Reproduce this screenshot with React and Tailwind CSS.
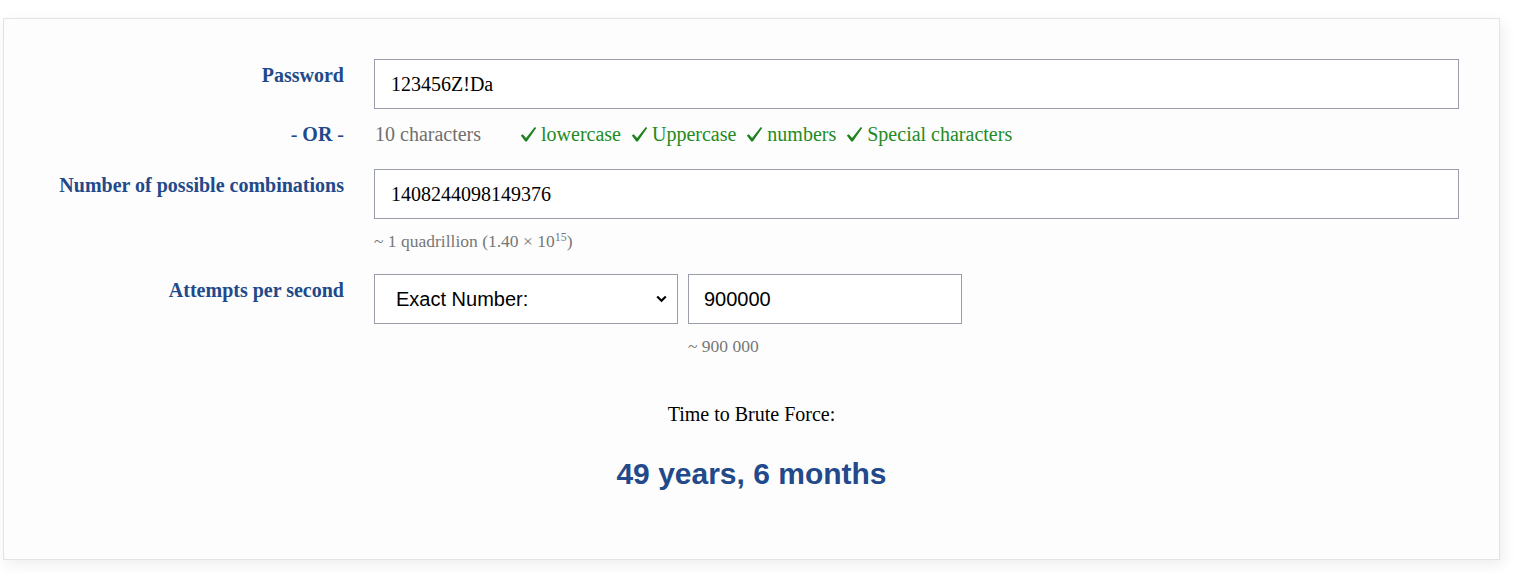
import React from "react";

const serif = "font-['Liberation_Serif','Times_New_Roman',serif]";

function Label({ children }) {
  return (
    <div className={`text-right pt-[5px] text-[20px] leading-[23px] font-bold text-[#22498a] ${serif}`}>
      {children}
    </div>
  );
}

function Check() {
  return (
    <svg width="17" height="17" viewBox="0 0 17 17" className="inline-block align-[-2px] mr-[4px]">
      <path d="M0.8 9.6 L2.8 8.2 L6.1 12.1 L14.8 1 L16.2 1.9 L6.8 15.6 L5.3 15.6 Z" fill="#1f821f" />
    </svg>
  );
}

export default function App() {
  const checks = ["lowercase", "Uppercase", "numbers", "Special characters"];
  return (
    <div className="min-h-[573px] bg-white pt-[18px] pl-[3px]">
      <div className={`w-[1497px] h-[542px] border border-[#e3e3e3] bg-[#fdfdfd] shadow-[3px_5px_14px_rgba(0,0,0,0.07)] pt-[40px] pr-[40px] ${serif}`}>
        <div className="grid grid-cols-[340px_1fr] gap-x-[30px]">
          {/* Password */}
          <Label>Password</Label>
          <input
            readOnly
            value="123456Z!Da"
            className={`h-[50px] w-full border border-[#9a9dab] bg-white px-[16px] text-[20px] text-black outline-none ${serif}`}
          />

          {/* OR */}
          <div className="text-right mt-[14px] mb-[23px] text-[20px] leading-[23px] text-[#22498a]">
            - <span className="font-bold">OR</span> -
          </div>
          <div className="mt-[14px] mb-[23px] flex items-center text-[20px] leading-[23px]">
            <span className="text-[#707070] w-[146px] pl-[1px]">10 characters</span>
            <div className="flex gap-[10px] text-[#228b22]">
              {checks.map((c) => (
                <span key={c} className="whitespace-nowrap">
                  <Check />
                  {c}
                </span>
              ))}
            </div>
          </div>

          {/* Combinations */}
          <Label>Number of possible combinations</Label>
          <div>
            <input
              readOnly
              value="1408244098149376"
              className={`h-[50px] w-full border border-[#9a9dab] bg-white px-[16px] text-[20px] text-black outline-none ${serif}`}
            />
            <div className="mt-[12px] mb-[23px] text-[17.5px] leading-[20px] text-[#777]">
              ~ 1 quadrillion (1.40 × 10<sup className="text-[12px]">15</sup>)
            </div>
          </div>

          {/* Attempts */}
          <Label>Attempts per second</Label>
          <div>
            <div className="flex gap-[10px]">
              <div className="relative w-[304px]">
                <select
                  defaultValue="exact"
                  className="h-[50px] w-full appearance-none border border-[#9a9dab] bg-white pl-[21px] pr-[30px] text-[20px] text-black outline-none font-['Liberation_Sans',Arial,sans-serif]"
                >
                  <option value="exact">Exact Number:</option>
                </select>
                <svg
                  className="pointer-events-none absolute right-[11px] top-[21px]"
                  width="11"
                  height="8"
                  viewBox="0 0 11 8"
                >
                  <path d="M1.2 1.5 L5.5 5.8 L9.8 1.5" fill="none" stroke="#000" strokeWidth="2.2" />
                </svg>
              </div>
              <input
                readOnly
                value="900000"
                className="h-[50px] w-[274px] border border-[#9a9dab] bg-white px-[15px] text-[20px] text-black outline-none font-['Liberation_Sans',Arial,sans-serif]"
              />
            </div>
            <div className="mt-[12px] pl-[314px] text-[17.5px] leading-[20px] text-[#777]">~ 900 000</div>
          </div>
        </div>

        <div className="mt-[47px] pl-[40px] text-center text-[20px] leading-[23px] text-black">
          Time to Brute Force:
        </div>
        <div className="mt-[30px] pl-[40px] text-center text-[30px] leading-[35px] font-bold text-[#22498a] font-['Liberation_Sans',Arial,sans-serif]">
          49 years, 6 months
        </div>
      </div>
    </div>
  );
}
